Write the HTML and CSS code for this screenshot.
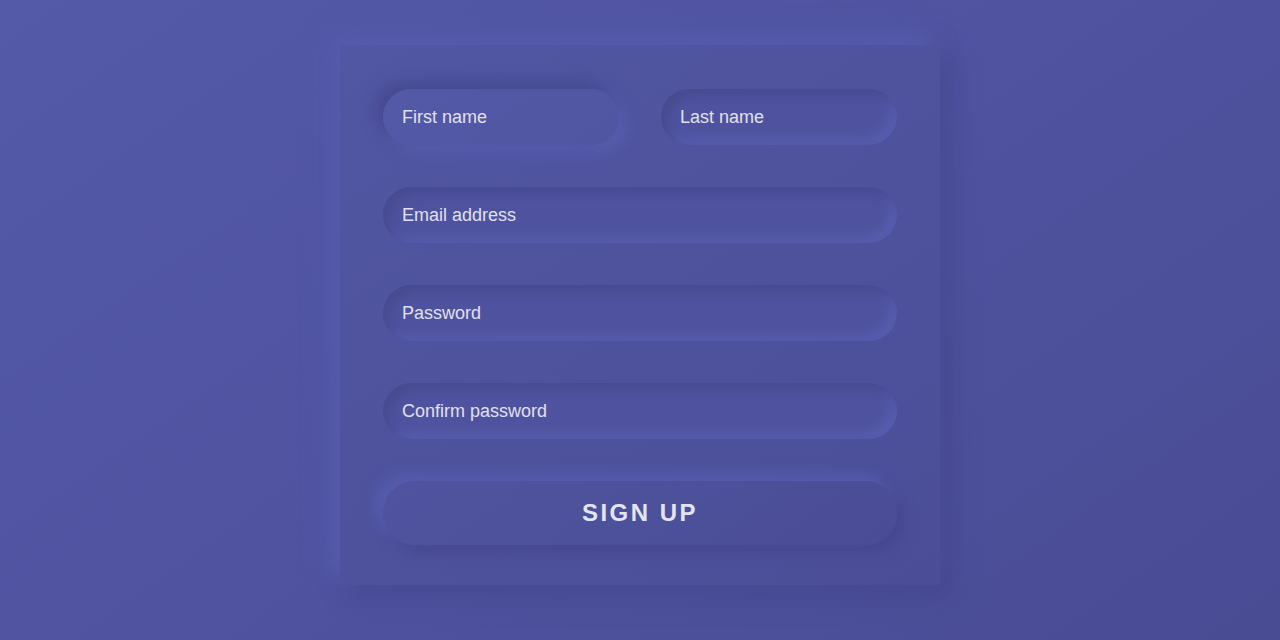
FILE: index.html
```html
<!DOCTYPE html>
<html lang="en">
<head>
    <meta charset="UTF-8">
    <meta name="viewport" content="width=device-width, initial-scale=1.0">
    <title>Sign Up</title>
    <link rel="stylesheet" href="styles.css">
</head>
<body>

    <!-- Sign up card -->
    <form class="card" onsubmit="return false">
        <div class="row">
            <input type="text" class="field field-active" placeholder="First name" autofocus>
            <input type="text" class="field" placeholder="Last name">
        </div>

        <input type="email" class="field" placeholder="Email address">
        <input type="password" class="field" placeholder="Password">
        <input type="password" class="field" placeholder="Confirm password">

        <button type="submit" class="button">Sign up</button>
    </form>

</body>
</html>
```

FILE: styles.css
```css
* {
    box-sizing: border-box;
}

body {
    font-family: "Liberation Sans", Arial, sans-serif;
    margin: 0;
    padding: 0 0 10px;
    height: 100vh;
    display: flex;
    justify-content: center;
    align-items: center;
    background: linear-gradient(145deg, #5459a8 0%, #4f53a0 50%, #494c93 100%);
}

/* Raised card */
.card {
    width: 600px;
    height: 540px;
    padding: 44px 43px 40px;
    display: flex;
    flex-direction: column;
    gap: 42px;
    background: linear-gradient(145deg, #5257a3, #4b4e97);
    box-shadow: -10px -10px 22px #575cae, 10px 10px 22px #45488d;
}

.row {
    display: grid;
    grid-template-columns: 1fr 1fr;
    gap: 42px;
}

/* Inset fields */
.field {
    width: 100%;
    height: 56px;
    padding: 1px 19px 0;
    border: none;
    outline: none;
    border-radius: 28px;
    font-family: inherit;
    font-size: 18px;
    color: #e4e4ee;
    caret-color: #d8d8e4;
    background: #4f539f;
    box-shadow: inset 7px 7px 10px #484b90, inset -7px -7px 10px #575cae;
}

.field::placeholder {
    color: #e0e0ea;
    opacity: 1;
}

/* Focused field pops out */
.field-active,
.field:focus {
    background: linear-gradient(145deg, #5459a8, #5156a2);
    box-shadow: -8px -8px 14px #474a90, 8px 8px 14px #575cae;
}

.button {
    height: 64px;
    border: none;
    border-radius: 32px;
    font-family: inherit;
    font-size: 24px;
    font-weight: bold;
    letter-spacing: 2.5px;
    text-transform: uppercase;
    color: #e4e4ee;
    background: linear-gradient(145deg, #5054a0, #4a4d95);
    box-shadow: -8px -8px 14px #565cae, 8px 8px 14px #46498e;
    cursor: pointer;
}
```
